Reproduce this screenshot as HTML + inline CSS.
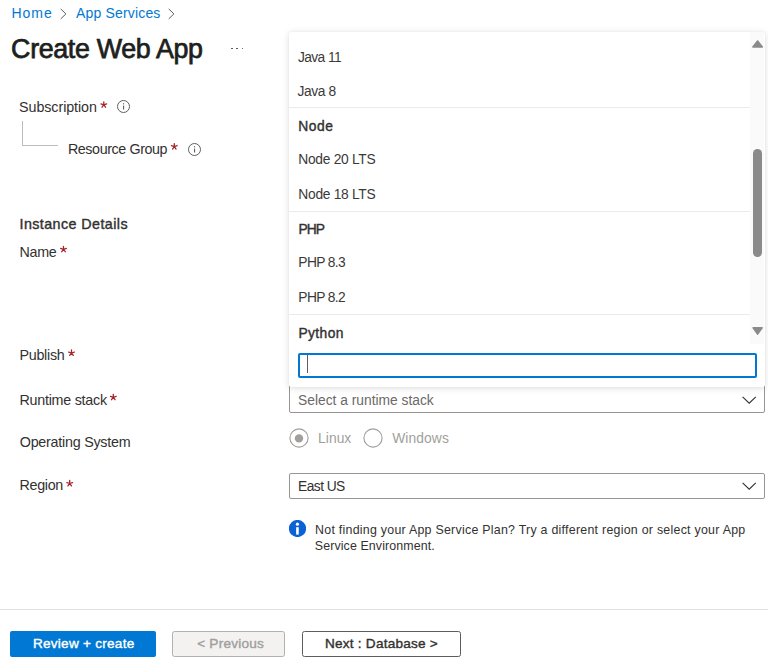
<!DOCTYPE html>
<html><head><meta charset="utf-8"><style>
html,body{margin:0;padding:0;background:#fff;width:768px;height:665px;overflow:hidden;position:relative}
body{font-family:"Liberation Sans",sans-serif}
.t{position:absolute;white-space:nowrap}
</style></head><body>
<div class="t" style="left:11.40px;top:6.15px;font-size:14.0px;line-height:14.0px;color:#0078d4;font-weight:400;letter-spacing:1.043px;">Home</div>
<div class="t" style="left:76.00px;top:6.15px;font-size:14.0px;line-height:14.0px;color:#0078d4;font-weight:400;letter-spacing:0.168px;">App Services</div>
<svg style="position:absolute;left:59.8px;top:7.5px" width="8" height="12" viewBox="0 0 8 12"><path d="M0.7 0.9 L5.9 5.9 L0.7 10.9" fill="none" stroke="#605e5c" stroke-width="1"/></svg>
<svg style="position:absolute;left:168.2px;top:7.5px" width="8" height="12" viewBox="0 0 8 12"><path d="M0.7 0.9 L5.9 5.9 L0.7 10.9" fill="none" stroke="#605e5c" stroke-width="1"/></svg>
<div class="t" style="left:11.12px;top:36.21px;font-size:26.8px;line-height:26.8px;color:#201f1e;font-weight:400;letter-spacing:-0.333px;-webkit-text-stroke:0.75px #201f1e;">Create Web App</div>
<div style="position:absolute;left:231.00px;top:47.90px;width:1.60px;height:1.60px;background:#484644;border-radius:50%"></div>
<div style="position:absolute;left:236.40px;top:47.90px;width:1.60px;height:1.60px;background:#484644;border-radius:50%"></div>
<div style="position:absolute;left:241.80px;top:47.90px;width:1.60px;height:1.60px;background:#484644;border-radius:50%"></div>
<div class="t" style="left:19.09px;top:99.70px;font-size:14.3px;line-height:14.3px;color:#323130;font-weight:400;letter-spacing:-0.074px;">Subscription</div>
<svg style="position:absolute;left:0;top:0;overflow:visible" width="1" height="1"><path d="M103.80 104.80 L103.80 101.80 M103.80 104.80 L106.65 103.87 M103.80 104.80 L105.56 107.23 M103.80 104.80 L102.04 107.23 M103.80 104.80 L100.95 103.87 " stroke="#a4262c" stroke-width="1.3" stroke-linecap="round" fill="none"/></svg>
<svg style="position:absolute;left:116.80px;top:99.80px" width="13" height="13" viewBox="0 0 13 13"><circle cx="6.5" cy="6.5" r="6" fill="none" stroke="#605e5c" stroke-width="1"/><rect x="6" y="5.6" width="1.1" height="3.9" fill="#605e5c"/><rect x="6" y="3.2" width="1.1" height="1.2" fill="#605e5c"/></svg>
<div style="position:absolute;left:22.00px;top:121.00px;width:1.00px;height:24.50px;background:#bebcba"></div>
<div style="position:absolute;left:22.00px;top:144.50px;width:35.50px;height:1.00px;background:#bebcba"></div>
<div class="t" style="left:67.90px;top:141.50px;font-size:14.3px;line-height:14.3px;color:#323130;font-weight:400;letter-spacing:-0.404px;">Resource Group</div>
<svg style="position:absolute;left:0;top:0;overflow:visible" width="1" height="1"><path d="M174.30 146.60 L174.30 143.60 M174.30 146.60 L177.15 145.67 M174.30 146.60 L176.06 149.03 M174.30 146.60 L172.54 149.03 M174.30 146.60 L171.45 145.67 " stroke="#a4262c" stroke-width="1.3" stroke-linecap="round" fill="none"/></svg>
<svg style="position:absolute;left:188.20px;top:142.80px" width="13" height="13" viewBox="0 0 13 13"><circle cx="6.5" cy="6.5" r="6" fill="none" stroke="#605e5c" stroke-width="1"/><rect x="6" y="5.6" width="1.1" height="3.9" fill="#605e5c"/><rect x="6" y="3.2" width="1.1" height="1.2" fill="#605e5c"/></svg>
<div class="t" style="left:19.49px;top:217.10px;font-size:14.3px;line-height:14.3px;color:#323130;font-weight:400;letter-spacing:0.422px;-webkit-text-stroke:0.40px #323130;">Instance Details</div>
<div class="t" style="left:19.44px;top:244.60px;font-size:14.3px;line-height:14.3px;color:#323130;font-weight:400;letter-spacing:-0.258px;">Name</div>
<svg style="position:absolute;left:0;top:0;overflow:visible" width="1" height="1"><path d="M63.50 249.30 L63.50 246.30 M63.50 249.30 L66.35 248.37 M63.50 249.30 L65.26 251.73 M63.50 249.30 L61.74 251.73 M63.50 249.30 L60.65 248.37 " stroke="#a4262c" stroke-width="1.3" stroke-linecap="round" fill="none"/></svg>
<div class="t" style="left:19.44px;top:347.90px;font-size:14.3px;line-height:14.3px;color:#323130;font-weight:400;letter-spacing:-0.267px;">Publish</div>
<svg style="position:absolute;left:0;top:0;overflow:visible" width="1" height="1"><path d="M71.50 353.00 L71.50 350.00 M71.50 353.00 L74.35 352.07 M71.50 353.00 L73.26 355.43 M71.50 353.00 L69.74 355.43 M71.50 353.00 L68.65 352.07 " stroke="#a4262c" stroke-width="1.3" stroke-linecap="round" fill="none"/></svg>
<div class="t" style="left:19.44px;top:392.50px;font-size:14.3px;line-height:14.3px;color:#323130;font-weight:400;letter-spacing:-0.244px;">Runtime stack</div>
<svg style="position:absolute;left:0;top:0;overflow:visible" width="1" height="1"><path d="M113.30 397.30 L113.30 394.30 M113.30 397.30 L116.15 396.37 M113.30 397.30 L115.06 399.73 M113.30 397.30 L111.54 399.73 M113.30 397.30 L110.45 396.37 " stroke="#a4262c" stroke-width="1.3" stroke-linecap="round" fill="none"/></svg>
<div class="t" style="left:19.75px;top:434.70px;font-size:14.3px;line-height:14.3px;color:#323130;font-weight:400;letter-spacing:-0.238px;">Operating System</div>
<div class="t" style="left:19.44px;top:478.40px;font-size:14.3px;line-height:14.3px;color:#323130;font-weight:400;letter-spacing:-0.294px;">Region</div>
<svg style="position:absolute;left:0;top:0;overflow:visible" width="1" height="1"><path d="M69.70 483.50 L69.70 480.50 M69.70 483.50 L72.55 482.57 M69.70 483.50 L71.46 485.93 M69.70 483.50 L67.94 485.93 M69.70 483.50 L66.85 482.57 " stroke="#a4262c" stroke-width="1.3" stroke-linecap="round" fill="none"/></svg>
<div style="position:absolute;left:289.00px;top:380.00px;width:476.20px;height:32.50px;box-sizing:border-box;border:1px solid #979593;border-radius:2px;background:#fff"></div>
<div class="t" style="left:298.10px;top:393.92px;font-size:13.8px;line-height:13.8px;color:#6b6967;font-weight:400;letter-spacing:-0.003px;">Select a runtime stack</div>
<svg style="position:absolute;left:741.80px;top:394.60px" width="15" height="10" viewBox="0 0 15 10"><path d="M0.6 1.8 L7.2 8.2 L13.8 1.8" fill="none" stroke="#323130" stroke-width="1.1"/></svg>
<svg style="position:absolute;left:289.30px;top:427.50px" width="20" height="20" viewBox="0 0 20 20"><circle cx="10" cy="10" r="9.1" fill="#fff" stroke="#a19f9d" stroke-width="1.1"/><circle cx="10" cy="10.4" r="4.2" fill="#a19f9d"/></svg>
<div class="t" style="left:318.05px;top:432.32px;font-size:13.8px;line-height:13.8px;color:#a19f9d;font-weight:400;letter-spacing:0.058px;">Linux</div>
<svg style="position:absolute;left:362.60px;top:427.50px" width="20" height="20" viewBox="0 0 20 20"><circle cx="10" cy="10" r="9.1" fill="#fff" stroke="#a19f9d" stroke-width="1.1"/></svg>
<div class="t" style="left:392.14px;top:432.32px;font-size:13.8px;line-height:13.8px;color:#a19f9d;font-weight:400;letter-spacing:0.120px;">Windows</div>
<div style="position:absolute;left:289.00px;top:472.50px;width:476.20px;height:26.00px;box-sizing:border-box;border:1px solid #979593;border-radius:2px;background:#fff"></div>
<div class="t" style="left:298.04px;top:480.12px;font-size:13.8px;line-height:13.8px;color:#323130;font-weight:400;letter-spacing:-0.553px;">East US</div>
<svg style="position:absolute;left:741.80px;top:480.85px" width="15" height="10" viewBox="0 0 15 10"><path d="M0.6 1.8 L7.2 8.2 L13.8 1.8" fill="none" stroke="#323130" stroke-width="1.1"/></svg>
<svg style="position:absolute;left:289px;top:520.3px" width="17" height="17" viewBox="0 0 17 17"><circle cx="8.5" cy="8.5" r="8.6" fill="#0a62d4"/><rect x="7.15" y="7.2" width="2.6" height="7.4" fill="#fff"/><circle cx="8.45" cy="4.15" r="1.6" fill="#fff"/></svg>
<div class="t" style="left:315.06px;top:524.30px;font-size:12.4px;line-height:12.4px;color:#323130;font-weight:400;letter-spacing:0.256px;">Not finding your App Service Plan? Try a different region or select your App</div>
<div class="t" style="left:314.78px;top:539.90px;font-size:12.4px;line-height:12.4px;color:#323130;font-weight:400;letter-spacing:0.118px;">Service Environment.</div>
<div style="position:absolute;left:0.00px;top:608.70px;width:768.00px;height:1.00px;background:#e1dfdd"></div>
<div style="position:absolute;left:10.40px;top:631.00px;width:145.40px;height:26.00px;background:#0078d4;border-radius:2px"></div>
<div class="t" style="left:32.95px;top:636.59px;font-size:13.6px;line-height:13.6px;color:#ffffff;font-weight:400;letter-spacing:0.245px;-webkit-text-stroke:0.38px #ffffff;">Review + create</div>
<div style="position:absolute;left:172.00px;top:631.00px;width:113.20px;height:26.30px;box-sizing:border-box;background:#f3f2f1;border:1px solid #b3b1af;border-radius:2.5px"></div>
<div class="t" style="left:197.23px;top:636.59px;font-size:13.6px;line-height:13.6px;color:#a19f9d;font-weight:400;letter-spacing:0.215px;-webkit-text-stroke:0.38px #a19f9d;">&lt; Previous</div>
<div style="position:absolute;left:302.00px;top:631.00px;width:159.00px;height:26.30px;box-sizing:border-box;background:#fff;border:1px solid #5f5d5b;border-radius:2.5px"></div>
<div class="t" style="left:325.00px;top:636.59px;font-size:13.6px;line-height:13.6px;color:#323130;font-weight:400;letter-spacing:0.224px;-webkit-text-stroke:0.38px #323130;">Next : Database &gt;</div>
<div style="position:absolute;left:288.80px;top:32.00px;width:476.20px;height:355.00px;background:#fff;border-radius:2px;box-shadow:0 1px 7px rgba(0,0,0,0.14), 0 0 1px rgba(0,0,0,0.10)"></div>
<div class="t" style="left:297.89px;top:51.22px;font-size:13.8px;line-height:13.8px;color:#3b3a39;font-weight:400;letter-spacing:-0.574px;">Java 11</div>
<div class="t" style="left:297.56px;top:84.82px;font-size:13.8px;line-height:13.8px;color:#3b3a39;font-weight:400;letter-spacing:-0.418px;">Java 8</div>
<div class="t" style="left:298.35px;top:120.42px;font-size:13.8px;line-height:13.8px;color:#323130;font-weight:400;letter-spacing:0.557px;-webkit-text-stroke:0.39px #323130;">Node</div>
<div class="t" style="left:298.30px;top:152.62px;font-size:13.8px;line-height:13.8px;color:#3b3a39;font-weight:400;letter-spacing:-0.291px;">Node 20 LTS</div>
<div class="t" style="left:298.35px;top:187.72px;font-size:13.8px;line-height:13.8px;color:#3b3a39;font-weight:400;letter-spacing:-0.292px;">Node 18 LTS</div>
<div class="t" style="left:298.62px;top:223.22px;font-size:13.8px;line-height:13.8px;color:#323130;font-weight:400;letter-spacing:-0.981px;-webkit-text-stroke:0.39px #323130;">PHP</div>
<div class="t" style="left:298.35px;top:256.32px;font-size:13.8px;line-height:13.8px;color:#3b3a39;font-weight:400;letter-spacing:-0.622px;">PHP 8.3</div>
<div class="t" style="left:298.35px;top:290.52px;font-size:13.8px;line-height:13.8px;color:#3b3a39;font-weight:400;letter-spacing:-0.620px;">PHP 8.2</div>
<div class="t" style="left:298.46px;top:327.32px;font-size:13.8px;line-height:13.8px;color:#323130;font-weight:400;letter-spacing:0.406px;-webkit-text-stroke:0.39px #323130;">Python</div>
<div style="position:absolute;left:288.80px;top:107.00px;width:461.20px;height:1.00px;background:#edebe9"></div>
<div style="position:absolute;left:288.80px;top:211.00px;width:461.20px;height:1.00px;background:#edebe9"></div>
<div style="position:absolute;left:288.80px;top:314.00px;width:461.20px;height:1.00px;background:#edebe9"></div>
<div style="position:absolute;left:750.00px;top:32.00px;width:14.00px;height:311.60px;background:#fafafa"></div>
<svg style="position:absolute;left:751px;top:39px" width="13" height="10" viewBox="0 0 13 10"><path d="M6.6 2.0 L11.3 7.9 L1.9 7.9 Z" fill="#8a8a8a" stroke="#8a8a8a" stroke-width="1.6" stroke-linejoin="round"/></svg>
<svg style="position:absolute;left:751px;top:326px" width="13" height="10" viewBox="0 0 13 10"><path d="M2.1 1.9 L11.1 1.9 L6.6 8.1 Z" fill="#8a8a8a" stroke="#8a8a8a" stroke-width="1.6" stroke-linejoin="round"/></svg>
<div style="position:absolute;left:752.80px;top:148.50px;width:9.30px;height:108.90px;background:#8a8a8a;border-radius:5px"></div>
<div style="position:absolute;left:298.00px;top:353.00px;width:458.50px;height:24.80px;box-sizing:border-box;border:2px solid #0078d4;border-radius:2px;background:#fff"></div>
<div style="position:absolute;left:307.00px;top:355.00px;width:1.00px;height:18.00px;background:#605e5c"></div>
</body></html>
